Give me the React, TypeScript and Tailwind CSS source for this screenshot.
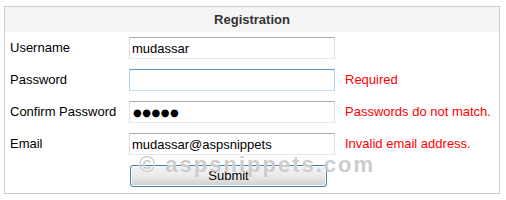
import React from "react";

const inputCls =
  "h-[22px] w-[206px] border border-t-[#abadb3] border-l-[#dbdfe6] border-r-[#dbdfe6] border-b-[#e3e9ef] bg-white px-[2px] text-[13px] text-black outline-none";

function Row({ label, children, error }: { label: string; children: React.ReactNode; error?: string }) {
  return (
    <div className="flex h-[32px] items-center">
      <div className="w-[124px] pl-[5px]">{label}</div>
      {children}
      {error && <span className="ml-[10px] text-[#ff0000]">{error}</span>}
    </div>
  );
}

export default function App() {
  return (
    <div className="h-[200px] w-[506px] bg-white pl-[4px] pt-[6px] font-['Liberation_Sans',Arial,sans-serif] text-[13px] text-black">
      <div className="relative h-[188px] w-[496px] border border-[#cccccc]">
        <div className="flex h-[25px] items-center justify-center bg-[#f5f5f5] font-bold text-[#333333]">
          Registration
        </div>
        <div>
          <Row label="Username">
            <input className={inputCls} defaultValue="mudassar" readOnly />
          </Row>
          <Row label="Password" error="Required">
            <input className="h-[22px] w-[206px] border border-t-[#5794bf] border-l-[#b7d5ea] border-r-[#b7d5ea] border-b-[#c7e2f1] bg-white px-[2px] outline-none" readOnly />
          </Row>
          <Row label="Confirm Password" error="Passwords do not match.">
            {/* masked value drawn as bullets */}
            <div className="flex h-[22px] w-[206px] items-center border border-t-[#abadb3] border-l-[#dbdfe6] border-r-[#dbdfe6] border-b-[#e3e9ef] bg-white px-[3px] font-['DejaVu_Sans',sans-serif] text-[10px] tracking-[0.5px] text-black">
              ●●●●●
            </div>
          </Row>
          <Row label="Email" error="Invalid email address.">
            <input className={inputCls} defaultValue="mudassar@aspsnippets" readOnly />
          </Row>
          <div className="flex h-[32px] items-center pl-[125px]">
            <button className="h-[22px] w-[197px] rounded-[3px] border border-[#3c7fb1] bg-gradient-to-b from-[#f2f2f2] via-[#ebebeb] to-[#cfcfcf] text-[13px] text-black shadow-[inset_0_0_0_1px_#fcfcfc]">
              Submit
            </button>
          </div>
        </div>
        <div className="pointer-events-none absolute left-[134px] top-[147px] text-[22px] leading-none font-bold tracking-[2px] text-[#a0a0a0]/55 [text-shadow:0_0_1px_#ffffff]">
          © aspsnippets.com
        </div>
      </div>
    </div>
  );
}
